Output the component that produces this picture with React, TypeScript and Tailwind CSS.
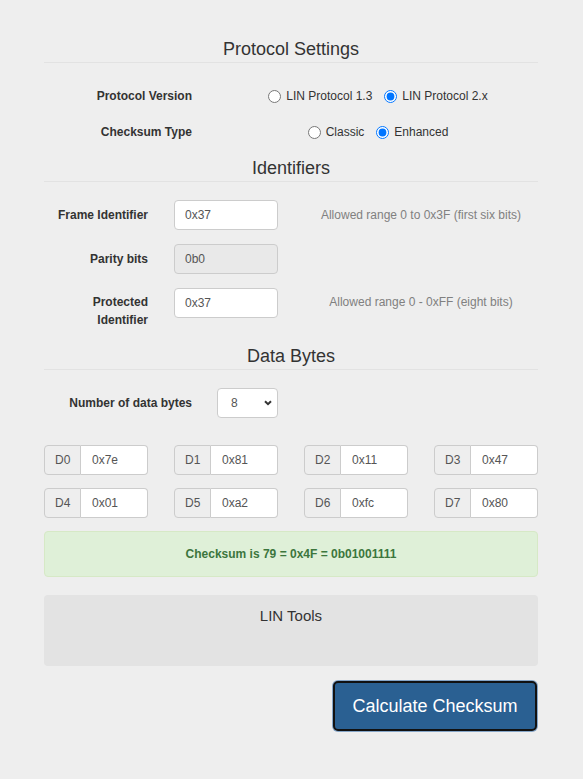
import React from "react";

const font = { fontFamily: '"Liberation Sans", Arial, Helvetica, sans-serif' };

function Heading({ children }: { children: React.ReactNode }) {
  return (
    <div className="text-[18px] leading-[20px] text-[#333] text-center pb-[3px] border-b border-[#e2e2e2]">
      {children}
    </div>
  );
}

function Radio({ name, label, checked }: { name: string; label: string; checked?: boolean }) {
  return (
    <label className="flex items-center gap-[5px]">
      <input type="radio" name={name} defaultChecked={checked} className="m-0 w-[13px] h-[13px]" />
      <span>{label}</span>
    </label>
  );
}

function ByteInput({ label, value }: { label: string; value: string }) {
  return (
    <div className="flex h-[30px]">
      <div className="w-[37px] shrink-0 bg-[#eeeeee] border border-[#cccccc] rounded-l-[4px] text-[#555] flex items-center pl-[10px]">
        {label}
      </div>
      <input
        defaultValue={value}
        className="min-w-0 flex-1 bg-white border border-l-0 border-[#cccccc] rounded-r-[4px] text-[#555] pl-[11px] outline-none"
      />
    </div>
  );
}

export default function App() {
  const bytes = [
    ["D0", "0x7e"],
    ["D1", "0x81"],
    ["D2", "0x11"],
    ["D3", "0x47"],
    ["D4", "0x01"],
    ["D5", "0xa2"],
    ["D6", "0xfc"],
    ["D7", "0x80"],
  ];
  return (
    <div className="min-h-[779px] bg-[#eeeeee] text-[12px] text-[#333]" style={font}>
      <div className="w-[494px] ml-[44px] pt-[39px] flex flex-col">
        <Heading>Protocol Settings</Heading>

        <div className="mt-[23px] flex items-center h-[20px]">
          <div className="w-[148px] text-right font-bold">Protocol Version</div>
          <div className="ml-[26px] flex-1 flex justify-center gap-[12px] text-[#333]">
            <Radio name="proto" label="LIN Protocol 1.3" />
            <Radio name="proto" label="LIN Protocol 2.x" checked />
          </div>
        </div>
        <div className="mt-[16px] flex items-center h-[20px]">
          <div className="w-[148px] text-right font-bold">Checksum Type</div>
          <div className="ml-[26px] flex-1 flex justify-center gap-[12px]">
            <Radio name="cs" label="Classic" />
            <Radio name="cs" label="Enhanced" checked />
          </div>
        </div>

        <div className="mt-[16px]">
          <Heading>Identifiers</Heading>
        </div>

        <div className="mt-[18px] grid grid-cols-[104px_104px_234px] gap-x-[26px] gap-y-[14px]">
          <div className="text-right font-bold pt-[6px] leading-[18px]">Frame Identifier</div>
          <input
            defaultValue="0x37"
            className="h-[30px] w-[104px] bg-white border border-[#cccccc] rounded-[4px] pl-[10px] text-[#555] outline-none"
          />
          <div className="text-center text-[#808080] pt-[6px] leading-[18px]">
            Allowed range 0 to 0x3F (first six bits)
          </div>

          <div className="text-right font-bold pt-[6px] leading-[18px]">Parity bits</div>
          <input
            defaultValue="0b0"
            disabled
            className="h-[30px] w-[104px] bg-[#e9e9e9] border border-[#cccccc] rounded-[4px] pl-[10px] text-[#555] outline-none"
          />
          <div />

          <div className="text-right font-bold pt-[5px] leading-[18px]">
            Protected
            <br />
            Identifier
          </div>
          <input
            defaultValue="0x37"
            className="h-[30px] w-[104px] bg-white border border-[#cccccc] rounded-[4px] pl-[10px] text-[#555] outline-none"
          />
          <div className="text-center text-[#808080] pt-[5px] leading-[18px]">
            Allowed range 0 - 0xFF (eight bits)
          </div>
        </div>

        <div className="mt-[17px]">
          <Heading>Data Bytes</Heading>
        </div>

        <div className="mt-[18px] flex items-center">
          <div className="w-[148px] text-right font-bold">Number of data bytes</div>
          <div className="ml-[25px] relative w-[61px] h-[30px]">
            <select
              defaultValue="8"
              className="appearance-none w-full h-full bg-white border border-[#cccccc] rounded-[4px] pl-[13px] text-[#555] outline-none"
            >
              {[1, 2, 3, 4, 5, 6, 7, 8].map((n) => (
                <option key={n} value={String(n)}>
                  {n}
                </option>
              ))}
            </select>
            <svg
              className="absolute right-[6px] top-[12px] pointer-events-none"
              width="8"
              height="6"
              viewBox="0 0 8 6"
            >
              <path d="M1 1.2 L4 4.2 L7 1.2" fill="none" stroke="#333" strokeWidth="2" />
            </svg>
          </div>
        </div>

        <div className="mt-[27px] grid grid-cols-4 gap-x-[26px] gap-y-[13px]">
          {bytes.map(([l, v]) => (
            <ByteInput key={l} label={l} value={v} />
          ))}
        </div>

        <div className="mt-[13px] h-[46px] bg-[#dff0d8] border border-[#d6e9c6] rounded-[4px] flex items-center justify-center font-bold text-[#3c763d]">
          Checksum is 79 = 0x4F = 0b01001111
        </div>

        <div className="mt-[18px] h-[71px] bg-[#e3e3e3] rounded-[4px] pt-[11px] text-center text-[15px] leading-[20px] text-[#333]">
          LIN Tools
        </div>

        <div className="mt-[15px] flex justify-end pr-[1px]">
          <button className="w-[204px] h-[50px] bg-[#2a6092] border-2 border-[#111] rounded-[5px] text-white text-[18px] shadow-[0_0_0_1px_#86a6c8]">
            Calculate Checksum
          </button>
        </div>
      </div>
    </div>
  );
}
